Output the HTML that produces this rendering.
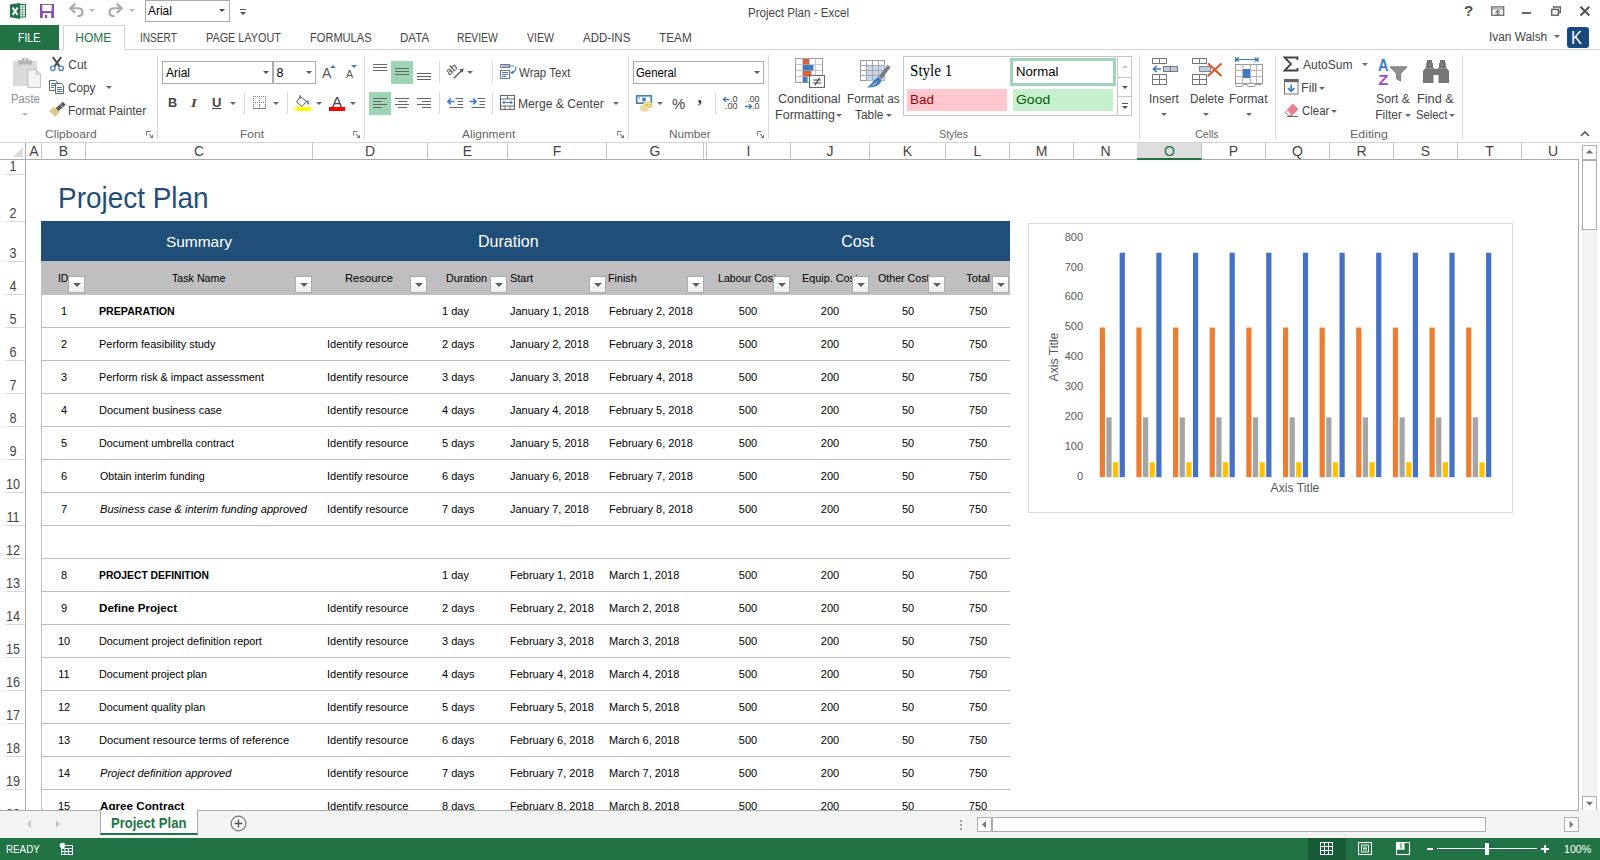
<!DOCTYPE html>
<html><head><meta charset="utf-8"><title>Project Plan - Excel</title>
<style>
*{box-sizing:border-box;margin:0;padding:0}
html,body{width:1600px;height:860px;overflow:hidden;background:#fff}
body{font-family:"Liberation Sans",sans-serif;position:relative;color:#444}
.t{position:absolute;white-space:nowrap;line-height:1}
.a{position:absolute}
.sep{position:absolute;width:1px;background:#dadada;top:55px;height:84px}
.sm{position:absolute;width:1px;background:#dadada}
.ar{position:absolute;width:0;height:0;border-left:3px solid transparent;border-right:3px solid transparent;border-top:3px solid #666}
.grp{position:absolute;top:128px;font-size:12px;color:#666;line-height:1;white-space:nowrap}
.ch{position:absolute;top:143px;height:16px;font-size:14px;line-height:16px;text-align:center;color:#444;border-right:1px solid #c6c6c6;padding-left:1px}
.rh{position:absolute;left:0;width:25px}
.rh:after{content:"";position:absolute;left:0;right:0;bottom:0;height:1px;background:linear-gradient(to right,#fbfbfb 0,#efefef 25%,#d6d6d6 30%,#d6d6d6 100%)}
.rn{position:absolute;left:0;width:26px;text-align:center;font-size:14.200px;line-height:1;color:#444;transform:scaleX(.89)}
.row{position:absolute;left:41px;width:969px;height:33px;border-bottom:1px solid #bdbdbd}
.c{position:absolute;white-space:nowrap;font-size:11px;line-height:13px;color:#000}
.fb{position:absolute;top:276px;width:17px;height:17px;border:1px solid #ababab;background:linear-gradient(#fff 0,#fff 60%,#f0f0f0 60%,#f2f2f2 100%)}
.fb:after{content:"";position:absolute;left:3.500px;top:6px;border-left:4px solid transparent;border-right:4px solid transparent;border-top:4.500px solid #606060}
.hd{position:absolute;white-space:nowrap;font-size:11px;line-height:13px;color:#000;top:272px;overflow:hidden}
</style></head><body>

<!-- title bar -->
<svg class="a" style="left:9px;top:2px" width="18" height="18" viewBox="9 2 18 18">
<rect x="19" y="4.500" width="6.500" height="12.500" fill="#fff" stroke="#217346" stroke-width="1"/>
<path d="M20 7h5M20 9.500h5M20 12h5M20 14.500h5M22.600 5v12" stroke="#217346" stroke-width=".55"/>
<path d="M10 4.600L20.200 3v16L10 17.300z" fill="#217346"/>
<path d="M12.600 7.600l5 7.400M17.600 7.600l-5 7.400" stroke="#fff" stroke-width="1.900"/>
</svg>
<svg class="a" style="left:40px;top:4px" width="14" height="14" viewBox="0 0 14 14">
<rect x="0" y="0" width="14" height="14" fill="#8a4fab"/>
<rect x="2.300" y=".9" width="9.400" height="6.200" fill="#fff"/>
<rect x="2.800" y="9.200" width="8.400" height="4.800" fill="#fff"/>
<rect x="4.900" y="11" width="2.300" height="3" fill="#8a4fab"/>
</svg>
<svg class="a" style="left:68px;top:2px" width="18" height="17" viewBox="68 2 18 17">
<path d="M70.500 8.300h7.200c3 0 4.800 1.700 4.800 4.100 0 2.300-1.900 3.800-5.300 3.800" fill="none" stroke="#ababab" stroke-width="2.100"/>
<path d="M75.300 3.800L70.300 8.300l5 4.500" fill="none" stroke="#ababab" stroke-width="2.300"/></svg>
<div class="ar" style="left:88.600px;top:9px;border-top-color:#b5b5b5"></div>
<svg class="a" style="left:107px;top:2px" width="18" height="17" viewBox="107 2 18 17">
<path d="M121.500 8.300h-7.200c-3 0-4.800 1.700-4.800 4.100 0 2.300 1.900 3.800 5.300 3.800" fill="none" stroke="#ababab" stroke-width="2.100"/>
<path d="M116.700 3.800l5 4.500-5 4.500" fill="none" stroke="#ababab" stroke-width="2.300"/></svg>
<div class="ar" style="left:128.800px;top:9px;border-top-color:#b5b5b5"></div>
<div class="a" style="left:145px;top:0;width:85px;height:22px;border:1px solid #ababab;background:#fff"></div>
<div class="t " style="left:148.40px;top:5px;font-size:12.5px;color:#000;;transform:scaleX(0.9526);transform-origin:0 0;">Arial</div>
<div class="ar" style="left:219px;top:9px;border-top-color:#444"></div>
<div class="a" style="left:240px;top:9px;width:6px;height:1px;background:#555"></div>
<div class="ar" style="left:240px;top:12px;border-top-color:#555"></div>
<div class="t " style="left:748.28px;top:7px;font-size:12px;color:#444;;transform:scaleX(0.9660);transform-origin:0 0;">Project Plan - Excel</div>
<div class="t " style="left:1463.69px;top:3.5px;font-size:14px;color:#555;font-weight:bold;transform:scaleX(1.0857);transform-origin:0 0;">?</div>
<svg class="a" style="left:1490px;top:5px" width="16" height="12" viewBox="1490 5 16 12"><rect x="1491.700" y="6.900" width="12" height="8.400" fill="#fff" stroke="#6a6a6a" stroke-width="1.300"/><path d="M1492 9h11.500" stroke="#6a6a6a" stroke-width=".9"/><path d="M1497.700 14.500V10.800M1495.600 12.600l2.100-2 2.100 2" stroke="#6a6a6a" stroke-width="1.100" fill="none"/><path d="M1495.300 14.200h4.800" stroke="#6a6a6a" stroke-width=".8"/></svg>
<div class="a" style="left:1522px;top:12px;width:9px;height:2px;background:#666"></div>
<svg class="a" style="left:1550px;top:5px" width="12" height="12" viewBox="0 0 12 12"><path d="M3.700 3.500V1.900h6.600v5.600h-1.800" fill="none" stroke="#666" stroke-width="1.500"/><rect x="1.700" y="4.400" width="6.600" height="5.800" fill="#fff" stroke="#666" stroke-width="1.500"/></svg>
<svg class="a" style="left:1579px;top:5px" width="12" height="12" viewBox="0 0 12 12"><path d="M1.500 1.700l8.800 8.800M10.300 1.700l-8.800 8.800" stroke="#555" stroke-width="2.100"/></svg>
<!-- tabs -->
<div class="a" style="left:0;top:49px;width:1600px;height:1px;background:#d4d4d4"></div>
<div class="a" style="left:0;top:25px;width:59px;height:25px;background:#217346"></div>
<div class="t " style="left:18.38px;top:32px;font-size:12px;color:#fff;;transform:scaleX(0.8737);transform-origin:0 0;">FILE</div>
<div class="a" style="left:63px;top:25px;width:62px;height:25px;border:1px solid #d4d4d4;border-bottom:1px solid #fff;background:#fff"></div>
<div class="t tab" style="left:75.25px;top:32px;font-size:12px;color:#217346;;transform:scaleX(1.0000);transform-origin:0 0;">HOME</div>
<div class="t tab" style="left:139.66px;top:32px;font-size:12px;color:#444;;transform:scaleX(0.8412);transform-origin:0 0;">INSERT</div>
<div class="t tab" style="left:205.90px;top:32px;font-size:12px;color:#444;;transform:scaleX(0.9028);transform-origin:0 0;">PAGE LAYOUT</div>
<div class="t tab" style="left:309.58px;top:32px;font-size:12px;color:#444;;transform:scaleX(0.9234);transform-origin:0 0;">FORMULAS</div>
<div class="t tab" style="left:399.78px;top:32px;font-size:12px;color:#444;;transform:scaleX(0.9658);transform-origin:0 0;">DATA</div>
<div class="t tab" style="left:457.39px;top:32px;font-size:12px;color:#444;;transform:scaleX(0.8595);transform-origin:0 0;">REVIEW</div>
<div class="t tab" style="left:527.00px;top:32px;font-size:12px;color:#444;;transform:scaleX(0.8770);transform-origin:0 0;">VIEW</div>
<div class="t tab" style="left:583.25px;top:32px;font-size:12px;color:#444;;transform:scaleX(0.9590);transform-origin:0 0;">ADD-INS</div>
<div class="t tab" style="left:659.00px;top:32px;font-size:12px;color:#444;;transform:scaleX(0.9844);transform-origin:0 0;">TEAM</div>
<div class="t " style="left:1488.91px;top:31px;font-size:12px;color:#444;;transform:scaleX(0.9869);transform-origin:0 0;">Ivan Walsh</div>
<div class="ar" style="left:1553.800px;top:35px"></div>
<div class="a" style="left:1567px;top:27px;width:22px;height:21px;background:#17497d;border-radius:3px"></div>
<div class="t " style="left:1571.27px;top:28.7px;font-size:18.5px;color:#fff;;transform:scaleX(0.8857);transform-origin:0 0;">K</div>
<!-- ribbon -->
<div class="a" style="left:0;top:142px;width:1600px;height:1px;background:#d4d4d4"></div>
<svg class="a" style="left:12px;top:57px" width="30" height="32" viewBox="0 0 30 32">
<rect x="1" y="3.700" width="24" height="25.200" rx="1.200" fill="#dadada"/>
<path d="M6.200 3.200h3.800v-1.200a1 1 0 0 1 1-1h4.300a1 1 0 0 1 1 1v1.200h3.800v4.200H6.200z" fill="#b4b4b4"/><rect x="12" y="1.700" width="2.400" height="1.600" fill="#e6e6e6"/>
<path d="M15.800 12.800h8.600l4.200 4.200v13.400H15.800z" fill="#f3f3f3" stroke="#bdbdbd"/><path d="M24.400 12.800v4.200h4.200" fill="none" stroke="#bdbdbd"/>
</svg>
<div class="t " style="left:10.81px;top:93px;font-size:12px;color:#8f8f8f;;transform:scaleX(0.9402);transform-origin:0 0;">Paste</div>
<div class="ar" style="left:21.6px;top:113px;border-top-color:#b5b5b5"></div>
<svg class="a" style="left:49px;top:56px" width="16" height="16" viewBox="0 0 16 16">
<path d="M3.800 1l6.700 9.300M12.200 1L5.500 10.300" stroke="#484848" stroke-width="2" fill="none"/>
<circle cx="3.800" cy="12.300" r="2.300" fill="none" stroke="#3f7bc0" stroke-width="1.200"/><circle cx="12.200" cy="12.300" r="2.300" fill="none" stroke="#3f7bc0" stroke-width="1.200"/></svg>
<div class="t " style="left:68.25px;top:59px;font-size:12px;color:#444;;transform:scaleX(1.0000);transform-origin:0 0;">Cut</div>
<svg class="a" style="left:48px;top:79px" width="17" height="16" viewBox="0 0 17 16">
<path d="M1.500 1.500h6l2 2v8h-8z" fill="#fff" stroke="#666"/><path d="M3 4.500h4M3 6.500h4M3 8.500h3" stroke="#3f7bc0"/>
<path d="M7.500 4.500h6l2 2v8h-8z" fill="#fff" stroke="#666"/><path d="M9 8.500h5M9 10.500h5M9 12.500h5" stroke="#3f7bc0"/></svg>
<div class="t " style="left:68.26px;top:82px;font-size:12px;color:#444;;transform:scaleX(0.9818);transform-origin:0 0;">Copy</div>
<div class="ar" style="left:105.5px;top:86px;border-top-color:#666"></div>
<svg class="a" style="left:48px;top:101px" width="19" height="18" viewBox="48 101 19 18">
<path d="M64.300 103.200L57 109.800" stroke="#5a5a5a" stroke-width="4.200" fill="none"/><path d="M62 105.300l-1.200 1.100" stroke="#8c8c8c" stroke-width="4.200"/>
<path d="M54.300 106.800l5.300 5.500-4.300 4.200-6.300-6z" fill="#dccb86"/><path d="M49 110.500l6.300 6" stroke="#f0c0a8" stroke-width="1" fill="none"/></svg>
<div class="t " style="left:67.77px;top:105px;font-size:12px;color:#444;;transform:scaleX(0.9840);transform-origin:0 0;">Format Painter</div>
<div class="t " style="left:44.93px;top:129px;font-size:10.5px;color:#666;;transform:scaleX(1.1486);transform-origin:0 0;">Clipboard</div>
<svg class="a" style="left:146px;top:131px" width="7" height="7" viewBox="0 0 7 7"><path d="M.5 4.500V.5H4.500" fill="none" stroke="#777"/><path d="M3 3l2.500 2.500" fill="none" stroke="#777"/><path d="M7 3.500V7H3.500z" fill="#777"/></svg>
<div class="sep" style="left:157px"></div>
<div class="a" style="left:162px;top:61px;width:111px;height:23px;border:1px solid #ababab;background:#fff"></div>
<div class="a" style="left:273px;top:61px;width:43px;height:23px;border:1px solid #ababab;background:#fff"></div>
<div class="t " style="left:165.50px;top:67px;font-size:12.5px;color:#000;;transform:scaleX(0.9588);transform-origin:0 0;">Arial</div>
<div class="ar" style="left:262.5px;top:71px;border-top-color:#555"></div>
<div class="t " style="left:276.50px;top:67px;font-size:12.5px;color:#000;;">8</div>
<div class="ar" style="left:305.5px;top:71px;border-top-color:#555"></div>
<div class="t " style="left:322.00px;top:65.5px;font-size:14.5px;color:#555;;transform:scaleX(0.9684);transform-origin:0 0;">A</div>
<div class="ar" style="left:329.500px;top:65px;border-top:none;border-bottom:3px solid #3f7bc0"></div>
<div class="t " style="left:345.50px;top:68.5px;font-size:11.5px;color:#555;;transform:scaleX(0.9333);transform-origin:0 0;">A</div>
<div class="ar" style="left:351px;top:65px;border-top-color:#3f7bc0"></div>
<div class="t " style="left:167.77px;top:96px;font-size:13px;color:#444;font-weight:bold;transform:scaleX(0.9750);transform-origin:0 0;">B</div>
<div class="t " style="left:191.27px;top:95.5px;font-size:13.5px;color:#444;font-style:italic;font-family:'Liberation Serif',serif;font-weight:bold;transform:scaleX(1.0833);transform-origin:0 0;">I</div>
<div class="t " style="left:212.00px;top:96px;font-size:13px;color:#444;font-weight:bold;text-decoration:underline;">U</div>
<div class="ar" style="left:230px;top:102px;border-top-color:#666"></div>
<div class="sm" style="left:244px;top:92px;height:22px"></div>
<svg class="a" style="left:252px;top:95px" width="15" height="15" viewBox="0 0 15 15" shape-rendering="crispEdges"><g fill="#7a7a7a"><rect x="1" y="1" width="1" height="1"/><rect x="1" y="7" width="1" height="1"/><rect x="3" y="1" width="1" height="1"/><rect x="3" y="7" width="1" height="1"/><rect x="5" y="1" width="1" height="1"/><rect x="5" y="7" width="1" height="1"/><rect x="7" y="1" width="1" height="1"/><rect x="7" y="7" width="1" height="1"/><rect x="9" y="1" width="1" height="1"/><rect x="9" y="7" width="1" height="1"/><rect x="11" y="1" width="1" height="1"/><rect x="11" y="7" width="1" height="1"/><rect x="13" y="1" width="1" height="1"/><rect x="13" y="7" width="1" height="1"/><rect x="1" y="3" width="1" height="1"/><rect x="7" y="3" width="1" height="1"/><rect x="13" y="3" width="1" height="1"/><rect x="1" y="5" width="1" height="1"/><rect x="7" y="5" width="1" height="1"/><rect x="13" y="5" width="1" height="1"/><rect x="1" y="9" width="1" height="1"/><rect x="7" y="9" width="1" height="1"/><rect x="13" y="9" width="1" height="1"/><rect x="1" y="11" width="1" height="1"/><rect x="7" y="11" width="1" height="1"/><rect x="13" y="11" width="1" height="1"/></g><rect x="1" y="13" width="13" height="1" fill="#7a7a7a"/></svg>
<div class="ar" style="left:273px;top:102px;border-top-color:#666"></div>
<div class="sm" style="left:287px;top:92px;height:22px"></div>
<svg class="a" style="left:294px;top:94px" width="18" height="18" viewBox="0 0 18 18">
<path d="M6.500 2.500l6 5-4.500 5-5.500-4.500z" fill="#fff" stroke="#555" stroke-width="1"/><path d="M6 1v4" stroke="#555"/>
<path d="M12.500 6.500c1.500 1 2.200 2.500 1.500 4" fill="none" stroke="#3f7bc0" stroke-width="1.500"/>
<rect x="1" y="13" width="16" height="4" fill="#ffff00"/></svg>
<div class="ar" style="left:316px;top:102px;border-top-color:#666"></div>
<div class="t " style="left:332.00px;top:95px;font-size:14.5px;color:#444;;transform:scaleX(1.0316);transform-origin:0 0;">A</div>
<div class="a" style="left:329px;top:107px;width:16px;height:4px;background:#ff0000"></div>
<div class="ar" style="left:350px;top:102px;border-top-color:#666"></div>
<div class="t " style="left:240.39px;top:129px;font-size:10.5px;color:#666;;transform:scaleX(1.1481);transform-origin:0 0;">Font</div>
<svg class="a" style="left:352.5px;top:131px" width="7" height="7" viewBox="0 0 7 7"><path d="M.5 4.500V.5H4.500" fill="none" stroke="#777"/><path d="M3 3l2.500 2.500" fill="none" stroke="#777"/><path d="M7 3.500V7H3.500z" fill="#777"/></svg>
<div class="sep" style="left:364px"></div>
<div class="a" style="left:373px;top:64px;width:14px;height:1px;background:#666"></div><div class="a" style="left:373px;top:67px;width:14px;height:1px;background:#666"></div><div class="a" style="left:373px;top:70px;width:14px;height:1px;background:#666"></div>
<div class="a" style="left:391px;top:61px;width:22px;height:23px;background:#9fd5b7"></div>
<div class="a" style="left:395px;top:68px;width:14px;height:1px;background:#666"></div><div class="a" style="left:395px;top:71px;width:14px;height:1px;background:#666"></div><div class="a" style="left:395px;top:74px;width:14px;height:1px;background:#666"></div>
<div class="a" style="left:417px;top:73px;width:14px;height:1px;background:#666"></div><div class="a" style="left:417px;top:76px;width:14px;height:1px;background:#666"></div><div class="a" style="left:417px;top:79px;width:14px;height:1px;background:#666"></div>
<div class="sm" style="left:439px;top:61px;height:22px"></div>
<svg class="a" style="left:445px;top:61px" width="22" height="20" viewBox="445 61 22 20"><text x="449.300" y="75.800" font-size="10.500" font-family="Liberation Sans" fill="#444" transform="rotate(-42 449.300 75.800)">ab</text><path d="M453.800 78.200L463 69.300" fill="none" stroke="#555" stroke-width="1.300"/><path d="M463.600 68.600l-4.200 1 3.300 3.200z" fill="#555"/></svg>
<div class="ar" style="left:466.5px;top:71px;border-top-color:#666"></div>
<div class="sm" style="left:492px;top:61px;height:22px"></div>
<svg class="a" style="left:499px;top:62px" width="19" height="18" viewBox="499 62 19 18">
<rect x="500.500" y="64.500" width="9" height="3" fill="#fff" stroke="#777"/><rect x="500.500" y="70.500" width="9" height="8" fill="#fff" stroke="#777"/>
<path d="M502 66h12M502 72.500h6M502 74.500h6M502 76.500h4" stroke="#3f7bc0" stroke-width="1"/>
<path d="M515.800 66.500c.5 3.500-1.500 6-5 6.300" fill="none" stroke="#3f7bc0" stroke-width="1.200"/><path d="M510.300 72.800l3-2.300.3 3.700z" fill="#3f7bc0"/></svg>
<div class="t " style="left:519.25px;top:67px;font-size:12px;color:#444;;transform:scaleX(0.9581);transform-origin:0 0;">Wrap Text</div>
<div class="a" style="left:369px;top:92px;width:22px;height:23px;background:#9fd5b7"></div>
<div class="a" style="left:373px;top:98px;width:14px;height:1px;background:#666"></div><div class="a" style="left:373px;top:101px;width:9px;height:1px;background:#666"></div><div class="a" style="left:373px;top:104px;width:14px;height:1px;background:#666"></div><div class="a" style="left:373px;top:107px;width:9px;height:1px;background:#666"></div>
<div class="a" style="left:395.0px;top:98px;width:14px;height:1px;background:#666"></div><div class="a" style="left:397.5px;top:101px;width:9px;height:1px;background:#666"></div><div class="a" style="left:395.0px;top:104px;width:14px;height:1px;background:#666"></div><div class="a" style="left:397.5px;top:107px;width:9px;height:1px;background:#666"></div>
<div class="a" style="left:417px;top:98px;width:14px;height:1px;background:#666"></div><div class="a" style="left:422px;top:101px;width:9px;height:1px;background:#666"></div><div class="a" style="left:417px;top:104px;width:14px;height:1px;background:#666"></div><div class="a" style="left:422px;top:107px;width:9px;height:1px;background:#666"></div>
<div class="sm" style="left:439px;top:92px;height:22px"></div>
<svg class="a" style="left:446px;top:96px" width="18" height="14" viewBox="446 96 18 14"><path d="M455.500 98.500h7.500M457.500 101.500h5.500M457.500 104.500h5.500M449.500 107.500h13.500" stroke="#666"/><path d="M454.500 101.500h-6.500M450.800 98.700l-2.800 2.800 2.800 2.800" fill="none" stroke="#3f7bc0" stroke-width="1.700"/></svg>
<svg class="a" style="left:468px;top:96px" width="18" height="14" viewBox="468 96 18 14"><path d="M477.500 98.500h7.500M479.500 101.500h5.500M479.500 104.500h5.500M471.500 107.500h13.500" stroke="#666"/><path d="M469.500 101.500h6.500M473.200 98.700l2.800 2.800-2.800 2.800" fill="none" stroke="#3f7bc0" stroke-width="1.700"/></svg>
<div class="sm" style="left:492px;top:92px;height:22px"></div>
<svg class="a" style="left:500px;top:95px" width="16" height="16" viewBox="0 0 16 16"><rect x=".5" y=".5" width="14" height="14" fill="#fff" stroke="#666"/><path d="M.5 4h14M.5 11h14M7.500 .5v3.500M5 11v3.500M10 11v3.500" stroke="#666"/><path d="M3 7.500h9" fill="none" stroke="#3f7bc0" stroke-width="1.200"/><path d="M2 7.500l2.500-2v4zM13 7.500l-2.500-2v4z" fill="#3f7bc0"/></svg>
<div class="t " style="left:518.24px;top:98px;font-size:12px;color:#444;;transform:scaleX(1.0120);transform-origin:0 0;">Merge &amp; Center</div>
<div class="ar" style="left:613px;top:102px;border-top-color:#666"></div>
<div class="t " style="left:462.00px;top:129px;font-size:10.5px;color:#666;;transform:scaleX(1.1398);transform-origin:0 0;">Alignment</div>
<svg class="a" style="left:616.7px;top:131px" width="7" height="7" viewBox="0 0 7 7"><path d="M.5 4.500V.5H4.500" fill="none" stroke="#777"/><path d="M3 3l2.500 2.500" fill="none" stroke="#777"/><path d="M7 3.500V7H3.500z" fill="#777"/></svg>
<div class="sep" style="left:628px"></div>
<div class="a" style="left:633px;top:61px;width:131px;height:23px;border:1px solid #ababab;background:#fff"></div>
<div class="t " style="left:635.80px;top:67px;font-size:12.5px;color:#000;;transform:scaleX(0.9075);transform-origin:0 0;">General</div>
<div class="ar" style="left:753.5px;top:71px;border-top-color:#555"></div>
<svg class="a" style="left:635px;top:94px" width="18" height="18" viewBox="635 94 18 18">
<rect x="636.700" y="95.800" width="14.600" height="7.400" fill="#fff" stroke="#3f7bc0" stroke-width="1.600"/><circle cx="644" cy="99.500" r="2" fill="#3f7bc0"/><rect x="638.500" y="97.300" width="1.500" height="1.200" fill="#3f7bc0"/>
<ellipse cx="648" cy="103.300" rx="4.300" ry="1.600" fill="#f1e3a6" stroke="#d4b94f" stroke-width=".7"/><ellipse cx="648.500" cy="105.800" rx="4.300" ry="1.600" fill="#f1e3a6" stroke="#d4b94f" stroke-width=".7"/><ellipse cx="644.500" cy="107.300" rx="4.300" ry="1.600" fill="#f1e3a6" stroke="#d4b94f" stroke-width=".7"/><ellipse cx="644.500" cy="109.600" rx="4.300" ry="1.600" fill="#f1e3a6" stroke="#e8b8a0" stroke-width=".7"/></svg>
<div class="ar" style="left:657px;top:102px;border-top-color:#666"></div>
<div class="t " style="left:672.00px;top:95.5px;font-size:15px;color:#444;;">%</div>
<div class="t " style="left:697.50px;top:88px;font-size:18px;color:#444;font-weight:bold;font-family:'Liberation Serif',serif;">,</div>
<div class="sm" style="left:715px;top:92px;height:22px"></div>
<svg class="a" style="left:722px;top:94px" width="17" height="17" viewBox="722 94 17 17"><text x="730" y="102.200" font-size="9" font-family="Liberation Sans" fill="#444">.0</text><text x="725" y="109.300" font-size="9" font-family="Liberation Sans" fill="#444">.00</text><path d="M729.500 99.500h-6M725.800 97.200l-2.400 2.300 2.400 2.300" fill="none" stroke="#3f7bc0" stroke-width="1.300"/></svg>
<svg class="a" style="left:744px;top:94px" width="17" height="17" viewBox="744 94 17 17"><text x="747" y="102.200" font-size="9" font-family="Liberation Sans" fill="#444">.00</text><text x="752" y="109.300" font-size="9" font-family="Liberation Sans" fill="#444">.0</text><path d="M745 106.500h6.500M749.200 104.200l2.400 2.300-2.400 2.300" fill="none" stroke="#3f7bc0" stroke-width="1.300"/></svg>
<div class="t " style="left:669.36px;top:129px;font-size:10.5px;color:#666;;transform:scaleX(1.1164);transform-origin:0 0;">Number</div>
<svg class="a" style="left:756.5px;top:131px" width="7" height="7" viewBox="0 0 7 7"><path d="M.5 4.500V.5H4.500" fill="none" stroke="#777"/><path d="M3 3l2.500 2.500" fill="none" stroke="#777"/><path d="M7 3.500V7H3.500z" fill="#777"/></svg>
<div class="sep" style="left:768px"></div>
<!-- ribbon right -->
<svg class="a" style="left:794px;top:56px" width="33" height="33" viewBox="794 56 33 33">
<rect x="795.500" y="58.500" width="27" height="24" fill="#fff" stroke="#9a9a9a"/>
<path d="M795.500 64.500h27M795.500 70.500h27M795.500 76.500h27M802.500 58.500v24M809.500 58.500v24M815.500 58.500v24" stroke="#b5b5b5" stroke-opacity=".75"/>
<rect x="803" y="59" width="6" height="5.500" fill="#d9623b"/><rect x="803" y="65" width="10.500" height="5.500" fill="#3f7bc0"/><rect x="803" y="71" width="8.500" height="5.500" fill="#d9623b"/><rect x="803" y="77" width="4.500" height="5.500" fill="#3f7bc0"/>
<rect x="809.500" y="75.500" width="15" height="12" fill="#fff" stroke="#666"/>
<path d="M813.300 80h7.600M813.300 83h7.600M819.500 77.800l-4.600 7.600" stroke="#444" stroke-width="1.100"/></svg>
<div class="t " style="left:777.73px;top:93px;font-size:12px;color:#444;;transform:scaleX(1.0426);transform-origin:0 0;">Conditional</div>
<div class="t " style="left:774.70px;top:109px;font-size:12px;color:#444;;transform:scaleX(1.0450);transform-origin:0 0;">Formatting</div>
<div class="ar" style="left:836px;top:114px;border-top-color:#666"></div>
<svg class="a" style="left:859px;top:58px" width="33" height="31" viewBox="859 58 33 31">
<rect x="860.500" y="60.500" width="24" height="20" fill="#fff" stroke="#9a9a9a"/>
<rect x="867" y="66" width="17.500" height="14.500" fill="#c5d7ee"/>
<path d="M860.500 65.500h24M860.500 70.500h24M860.500 75.500h24M866.500 60.500v20M872.500 60.500v20M878.500 60.500v20" stroke="#a8a8a8"/>
<path d="M887.600 65l2.900 2.200-8.600 11.800-3.200-2.400z" fill="#7c7c7c"/>
<path d="M878 77l3.600 2.700c-.6 5-6.800 8.300-14.600 7.700 4.300-2.300 5.600-6.600 11-10.400z" fill="#3f7bc0"/><path d="M872.500 85.200c2-.6 3.500-1.800 4.500-3.500" stroke="#cfe0f5" stroke-width="1" fill="none"/></svg>
<div class="t " style="left:846.52px;top:93px;font-size:12px;color:#444;;transform:scaleX(0.9762);transform-origin:0 0;">Format as</div>
<div class="t " style="left:855.25px;top:109px;font-size:12px;color:#444;;transform:scaleX(0.9911);transform-origin:0 0;">Table</div>
<div class="ar" style="left:885.7px;top:114px;border-top-color:#666"></div>
<div class="a" style="left:903px;top:56px;width:229px;height:60px;border:1px solid #c6c6c6;background:#fff"></div>
<div class="t " style="left:910.31px;top:63px;font-size:16px;color:#000;font-family:'Liberation Serif',serif;transform:scaleX(0.9419);transform-origin:0 0;">Style 1</div>
<div class="a" style="left:1010px;top:58px;width:106px;height:28px;border:3px solid #9fd5b7;background:#fff;outline:0"></div>
<div class="t " style="left:1015.99px;top:65px;font-size:13px;color:#000;;transform:scaleX(1.0125);transform-origin:0 0;">Normal</div>
<div class="a" style="left:907px;top:89px;width:100px;height:22px;background:#ffc7ce"></div>
<div class="t " style="left:910.21px;top:93px;font-size:13px;color:#9c0006;;transform:scaleX(1.0353);transform-origin:0 0;">Bad</div>
<div class="a" style="left:1013px;top:89px;width:100px;height:22px;background:#c6efce"></div>
<div class="t " style="left:1016.19px;top:93px;font-size:13px;color:#006100;;transform:scaleX(1.0744);transform-origin:0 0;">Good</div>
<div class="a" style="left:1117px;top:56px;width:15px;height:60px;border:1px solid #c6c6c6;background:#fff"></div>
<div class="a" style="left:1117px;top:77px;width:15px;height:1px;background:#c6c6c6"></div>
<div class="a" style="left:1117px;top:96px;width:15px;height:1px;background:#c6c6c6"></div>
<div class="ar" style="left:1121.500px;top:65px;border-top:none;border-bottom:3px solid #c6c6c6"></div>
<div class="ar" style="left:1121.5px;top:86px;border-top-color:#555"></div>
<div class="a" style="left:1121.500px;top:103px;width:6px;height:1px;background:#555"></div>
<div class="ar" style="left:1121.5px;top:106px;border-top-color:#555"></div>
<div class="t " style="left:938.74px;top:129px;font-size:10.5px;color:#666;;transform:scaleX(1.0180);transform-origin:0 0;">Styles</div>
<div class="sep" style="left:1139px"></div>
<svg class="a" style="left:1151px;top:57px" width="28" height="29" viewBox="0 0 28 29">
<rect x="1.500" y="1.500" width="14" height="5" fill="#fff" stroke="#777"/><path d="M8.500 1.500v5" stroke="#777"/>
<rect x="12.500" y="9.500" width="14" height="5" fill="#b9cde8" stroke="#777"/><path d="M19.500 9.500v5" stroke="#777"/>
<path d="M10 12H2.500M5.500 9l-3 3 3 3" fill="none" stroke="#3f7bc0" stroke-width="1.700"/>
<rect x="1.500" y="17.500" width="14" height="10" fill="#fff" stroke="#777"/><path d="M8.500 17.500v10M1.500 22.500h14" stroke="#777"/></svg>
<div class="t " style="left:1149.01px;top:93px;font-size:12px;color:#444;;transform:scaleX(0.9914);transform-origin:0 0;">Insert</div>
<div class="ar" style="left:1161px;top:113px;border-top-color:#666"></div>
<svg class="a" style="left:1191px;top:57px" width="32" height="29" viewBox="0 0 32 29">
<rect x="1.500" y="1.500" width="14" height="5" fill="#fff" stroke="#777"/><path d="M8.500 1.500v5" stroke="#777"/>
<rect x="8.500" y="9.500" width="11" height="5" fill="#b9cde8" stroke="#888"/>
<rect x="1.500" y="17.500" width="14" height="10" fill="#fff" stroke="#777"/><path d="M8.500 17.500v10M1.500 22.500h14" stroke="#777"/>
<path d="M17 6.500l13.500 12.500M30.500 6.500L17 19" stroke="#e0552b" stroke-width="2.200"/></svg>
<div class="t " style="left:1189.52px;top:93px;font-size:12px;color:#444;;transform:scaleX(0.9774);transform-origin:0 0;">Delete</div>
<div class="ar" style="left:1203px;top:113px;border-top-color:#666"></div>
<svg class="a" style="left:1234px;top:56px" width="30" height="32" viewBox="0 0 30 32">
<path d="M1.500 1v5M24 1v5M2 3.500h21.500M5 1.500l-3 2 3 2M20.500 1.500l3 2-3 2" fill="none" stroke="#3f7bc0" stroke-width="1.100"/>
<rect x="1.500" y="8.500" width="27" height="19" fill="#fff" stroke="#9a9a9a"/><path d="M1.500 14.500h27M1.500 20.500h27M8.500 8.500v19M16.500 8.500v19M22.500 8.500v19" stroke="#b5b5b5"/>
<rect x="9" y="13" width="7" height="9" fill="#3f7bc0"/>
<path d="M2 27.500v3h6l1-2h4l1 2h6l1-2h6" fill="none" stroke="#9a9a9a"/></svg>
<div class="t " style="left:1229.49px;top:93px;font-size:12px;color:#444;;transform:scaleX(1.0135);transform-origin:0 0;">Format</div>
<div class="ar" style="left:1246px;top:113px;border-top-color:#666"></div>
<div class="t " style="left:1195.25px;top:129px;font-size:10.5px;color:#666;;transform:scaleX(1.0000);transform-origin:0 0;">Cells</div>
<div class="sep" style="left:1275px"></div>
<svg class="a" style="left:1283px;top:56px" width="16" height="16" viewBox="0 0 16 16"><path d="M14.500 4V1.500H1.500L8 8l-6.500 6.500h13V12" fill="none" stroke="#444" stroke-width="1.800"/></svg>
<div class="t " style="left:1302.50px;top:59px;font-size:12px;color:#444;;transform:scaleX(1.0052);transform-origin:0 0;">AutoSum</div>
<div class="ar" style="left:1361.5px;top:63px;border-top-color:#666"></div>
<svg class="a" style="left:1283px;top:79px" width="16" height="16" viewBox="0 0 16 16"><rect x="1.500" y=".5" width="13.500" height="14.500" fill="#fff" stroke="#777"/><rect x="1" y="0" width="14.500" height="3.200" fill="#666"/><path d="M8.200 5.500v6.500M5 9.200l3.200 3.200 3.200-3.200" fill="none" stroke="#3f7bc0" stroke-width="1.700"/></svg>
<div class="t " style="left:1301.44px;top:82px;font-size:12px;color:#444;;transform:scaleX(1.0556);transform-origin:0 0;">Fill</div>
<div class="ar" style="left:1319px;top:87px;border-top-color:#666"></div>
<svg class="a" style="left:1284px;top:103px" width="16" height="14" viewBox="0 0 16 14"><path d="M8.500 1l5.500 5-6 6.500H4.500L1.500 9.500z" fill="#ee7f92" stroke="#d85a72" stroke-width=".6"/><path d="M1.500 9.500l3 3H8l-4-5.500z" fill="#fff" stroke="#d85a72" stroke-width=".6"/><path d="M3 13.500h11" stroke="#666"/></svg>
<div class="t " style="left:1302.02px;top:105px;font-size:12px;color:#444;;transform:scaleX(0.9554);transform-origin:0 0;">Clear</div>
<div class="ar" style="left:1331px;top:110px;border-top-color:#666"></div>
<svg class="a" style="left:1377px;top:57px" width="32" height="30" viewBox="0 0 32 30">
<text x="1" y="13.700" font-size="16" font-family="Liberation Sans" font-weight="bold" fill="#3f7bc0" textLength="10.500" lengthAdjust="spacingAndGlyphs">A</text>
<text x="1.300" y="27.800" font-size="15.500" font-family="Liberation Sans" font-weight="bold" fill="#9b4fc4" textLength="10.200" lengthAdjust="spacingAndGlyphs">Z</text>
<path d="M13 9.800h17l-6.500 7v7.300l-4 -2.300v-5z" fill="#8f8f8f" stroke="#6e6e6e" stroke-width=".8"/></svg>
<div class="t " style="left:1375.74px;top:93px;font-size:12px;color:#444;;transform:scaleX(1.0153);transform-origin:0 0;">Sort &amp;</div>
<div class="t " style="left:1375.25px;top:109px;font-size:12px;color:#444;;transform:scaleX(1.0000);transform-origin:0 0;">Filter</div>
<div class="ar" style="left:1404.5px;top:114px;border-top-color:#666"></div>
<svg class="a" style="left:1422px;top:59px" width="28" height="26" viewBox="0 0 28 26">
<path d="M5 1h5v3h1v4l1.500 2h3L17 8V4h1V1h5v3h1v4.500l3 3.500v12H16.500v-8h-5v8H1V12l3-3.500V4h1z" fill="#767676"/><path d="M4.500 9.500h6.500M17 9.500h6.500" stroke="#9a9a9a" stroke-width=".8"/></svg>
<div class="t " style="left:1417.19px;top:93px;font-size:12px;color:#444;;transform:scaleX(1.0597);transform-origin:0 0;">Find &amp;</div>
<div class="t " style="left:1415.78px;top:109px;font-size:12px;color:#444;;transform:scaleX(0.9389);transform-origin:0 0;">Select</div>
<div class="ar" style="left:1449px;top:114px;border-top-color:#666"></div>
<div class="t " style="left:1349.62px;top:129px;font-size:10.5px;color:#666;;transform:scaleX(1.1789);transform-origin:0 0;">Editing</div>
<div class="sep" style="left:1462px"></div>
<svg class="a" style="left:1580px;top:130px" width="10" height="7" viewBox="0 0 10 7"><path d="M1 6l4-4 4 4" fill="none" stroke="#555" stroke-width="1.600"/></svg>
<!-- column headers -->
<div class="a" style="left:0;top:159px;width:1579px;height:1px;background:#ababab"></div>
<div class="a" style="left:25px;top:143px;width:1px;height:667px;background:#ababab"></div>
<div class="a" style="left:13px;top:147px;width:0;height:0;border-left:10px solid transparent;border-bottom:10px solid #dcdcdc"></div>
<div class="ch" style="left:26px;width:16px;">A</div>
<div class="ch" style="left:41px;width:45px;">B</div>
<div class="ch" style="left:85px;width:228px;">C</div>
<div class="ch" style="left:312px;width:116px;">D</div>
<div class="ch" style="left:427px;width:81px;">E</div>
<div class="ch" style="left:507px;width:100px;">F</div>
<div class="ch" style="left:606px;width:98px;">G</div>
<div class="ch" style="left:703px;width:4px;"></div>
<div class="ch" style="left:706px;width:85px;">I</div>
<div class="ch" style="left:790px;width:80px;">J</div>
<div class="ch" style="left:869px;width:77px;">K</div>
<div class="ch" style="left:945px;width:65px;">L</div>
<div class="ch" style="left:1009px;width:65px;">M</div>
<div class="ch" style="left:1073px;width:65px;">N</div>
<div class="ch" style="left:1137px;width:65px;background:#dedede;color:#217346;border-bottom:2px solid #217346;height:17px;">O</div>
<div class="ch" style="left:1201px;width:65px;">P</div>
<div class="ch" style="left:1265px;width:65px;">Q</div>
<div class="ch" style="left:1329px;width:65px;">R</div>
<div class="ch" style="left:1393px;width:65px;">S</div>
<div class="ch" style="left:1457px;width:65px;">T</div>
<div class="ch" style="left:1521px;width:59px;border-right:none;padding-left:5px;">U</div>
<!-- row headers -->
<div class="rh" style="top:160px;height:15px"></div>
<div class="rn" style="top:158.9px">1</div>
<div class="rh" style="top:174px;height:48px"></div>
<div class="rn" style="top:205.9px">2</div>
<div class="rh" style="top:221px;height:41px"></div>
<div class="rn" style="top:245.9px">3</div>
<div class="rh" style="top:261px;height:34px"></div>
<div class="rn" style="top:278.9px">4</div>
<div class="rh" style="top:294px;height:34px"></div>
<div class="rn" style="top:311.9px">5</div>
<div class="rh" style="top:327px;height:34px"></div>
<div class="rn" style="top:344.9px">6</div>
<div class="rh" style="top:360px;height:34px"></div>
<div class="rn" style="top:377.9px">7</div>
<div class="rh" style="top:393px;height:34px"></div>
<div class="rn" style="top:410.9px">8</div>
<div class="rh" style="top:426px;height:34px"></div>
<div class="rn" style="top:443.9px">9</div>
<div class="rh" style="top:459px;height:34px"></div>
<div class="rn" style="top:476.9px">10</div>
<div class="rh" style="top:492px;height:34px"></div>
<div class="rn" style="top:509.9px">11</div>
<div class="rh" style="top:525px;height:34px"></div>
<div class="rn" style="top:542.9px">12</div>
<div class="rh" style="top:558px;height:34px"></div>
<div class="rn" style="top:575.9px">13</div>
<div class="rh" style="top:591px;height:34px"></div>
<div class="rn" style="top:608.9px">14</div>
<div class="rh" style="top:624px;height:34px"></div>
<div class="rn" style="top:641.9px">15</div>
<div class="rh" style="top:657px;height:34px"></div>
<div class="rn" style="top:674.9px">16</div>
<div class="rh" style="top:690px;height:34px"></div>
<div class="rn" style="top:707.9px">17</div>
<div class="rh" style="top:723px;height:34px"></div>
<div class="rn" style="top:740.9px">18</div>
<div class="rh" style="top:756px;height:34px"></div>
<div class="rn" style="top:773.9px">19</div>
<div class="rh" style="top:789px;height:34px"></div>
<div class="rn" style="top:806.9px">20</div>
<!-- sheet content -->
<div class="t " style="left:57.93px;top:183.5px;font-size:29px;color:#1f4e79;;transform:scaleX(0.9629);transform-origin:0 0;">Project Plan</div>
<div class="a" style="left:41px;top:221px;width:1px;height:589px;background:#c0c0c0"></div>
<div class="a" style="left:41px;top:221px;width:969px;height:40px;background:#1f4e79"></div>
<div class="t " style="left:49.099999999999994px;width:300px;text-align:center;top:234px;font-size:15.33px;color:#fff;;transform:scaleX(1.0085);"><span>Summary</span></div>
<div class="t " style="left:358.3px;width:300px;text-align:center;top:234px;font-size:16px;color:#fff;;">Duration</div>
<div class="t " style="left:707.7px;width:300px;text-align:center;top:234px;font-size:16px;color:#fff;;">Cost</div>
<div class="a" style="left:41px;top:261px;width:969px;height:34px;background:#bfbfbf"></div>
<div class="t " style="left:58.36px;top:272px;font-size:11px;color:#000;line-height:13px;transform:scaleX(0.9368);transform-origin:0 0;">ID</div>
<div class="t " style="left:172.06px;top:272px;font-size:11px;color:#000;line-height:13px;transform:scaleX(0.9696);transform-origin:0 0;">Task Name</div>
<div class="t " style="left:345.18px;top:272px;font-size:11px;color:#000;line-height:13px;transform:scaleX(1.0198);transform-origin:0 0;">Resource</div>
<div class="t " style="left:446.31px;top:272px;font-size:11px;color:#000;line-height:13px;transform:scaleX(0.9862);transform-origin:0 0;">Duration</div>
<div class="t " style="left:510.00px;top:272px;font-size:11px;color:#000;line-height:13px;transform:scaleX(0.9934);transform-origin:0 0;">Start</div>
<div class="t " style="left:608.32px;top:272px;font-size:11px;color:#000;line-height:13px;transform:scaleX(0.9802);transform-origin:0 0;">Finish</div>
<div class="a" style="left:0;top:261px;width:775.6px;height:34px;overflow:hidden"><div class="a" style="left:0;top:-261px"><div class="t " style="left:717.53px;top:272px;font-size:11px;color:#000;line-height:13px;transform:scaleX(0.9695);transform-origin:0 0;">Labour Cost</div></div></div>
<div class="a" style="left:0;top:261px;width:856.6px;height:34px;overflow:hidden"><div class="a" style="left:0;top:-261px"><div class="t " style="left:802.02px;top:272px;font-size:11px;color:#000;line-height:13px;transform:scaleX(0.9830);transform-origin:0 0;">Equip. Cost</div></div></div>
<div class="a" style="left:0;top:261px;width:929.6px;height:34px;overflow:hidden"><div class="a" style="left:0;top:-261px"><div class="t " style="left:877.62px;top:272px;font-size:11px;color:#000;line-height:13px;transform:scaleX(0.9687);transform-origin:0 0;">Other Cost</div></div></div>
<div class="t " style="left:965.84px;top:272px;font-size:11px;color:#000;line-height:13px;transform:scaleX(1.0337);transform-origin:0 0;">Total</div>
<div class="fb" style="left:68px"></div>
<div class="fb" style="left:295px"></div>
<div class="fb" style="left:410px"></div>
<div class="fb" style="left:490px"></div>
<div class="fb" style="left:589px"></div>
<div class="fb" style="left:687px"></div>
<div class="fb" style="left:773px"></div>
<div class="fb" style="left:852px"></div>
<div class="fb" style="left:928px"></div>
<div class="fb" style="left:992px"></div>
<div class="row" style="top:295px">
<div class="c" style="left:-7px;width:60px;text-align:center;top:10px">1</div>
<div class="t " style="left:58.28px;top:10px;font-size:11px;color:#000;font-weight:bold;line-height:13px;;transform:scaleX(0.9662);transform-origin:0 0;">PREPARATION</div>
<div class="c" style="left:401px;top:10px;">1 day</div>
<div class="c" style="left:469px;top:10px;">January 1, 2018</div>
<div class="c" style="left:568px;top:10px;">February 2, 2018</div>
<div class="c" style="left:677px;width:60px;text-align:center;top:10px">500</div>
<div class="c" style="left:759px;width:60px;text-align:center;top:10px">200</div>
<div class="c" style="left:837px;width:60px;text-align:center;top:10px">50</div>
<div class="c" style="left:907px;width:60px;text-align:center;top:10px">750</div>
</div>
<div class="row" style="top:328px">
<div class="c" style="left:-7px;width:60px;text-align:center;top:10px">2</div>
<div class="t " style="left:58.00px;top:10px;font-size:11px;color:#000;line-height:13px;;transform:scaleX(0.9970);transform-origin:0 0;">Perform feasibility study</div>
<div class="c" style="left:286px;top:10px;">Identify resource</div>
<div class="c" style="left:401px;top:10px;">2 days</div>
<div class="c" style="left:469px;top:10px;">January 2, 2018</div>
<div class="c" style="left:568px;top:10px;">February 3, 2018</div>
<div class="c" style="left:677px;width:60px;text-align:center;top:10px">500</div>
<div class="c" style="left:759px;width:60px;text-align:center;top:10px">200</div>
<div class="c" style="left:837px;width:60px;text-align:center;top:10px">50</div>
<div class="c" style="left:907px;width:60px;text-align:center;top:10px">750</div>
</div>
<div class="row" style="top:361px">
<div class="c" style="left:-7px;width:60px;text-align:center;top:10px">3</div>
<div class="t " style="left:58.01px;top:10px;font-size:11px;color:#000;line-height:13px;;transform:scaleX(0.9882);transform-origin:0 0;">Perform risk &amp; impact assessment</div>
<div class="c" style="left:286px;top:10px;">Identify resource</div>
<div class="c" style="left:401px;top:10px;">3 days</div>
<div class="c" style="left:469px;top:10px;">January 3, 2018</div>
<div class="c" style="left:568px;top:10px;">February 4, 2018</div>
<div class="c" style="left:677px;width:60px;text-align:center;top:10px">500</div>
<div class="c" style="left:759px;width:60px;text-align:center;top:10px">200</div>
<div class="c" style="left:837px;width:60px;text-align:center;top:10px">50</div>
<div class="c" style="left:907px;width:60px;text-align:center;top:10px">750</div>
</div>
<div class="row" style="top:394px">
<div class="c" style="left:-7px;width:60px;text-align:center;top:10px">4</div>
<div class="t " style="left:58.00px;top:10px;font-size:11px;color:#000;line-height:13px;;transform:scaleX(1.0000);transform-origin:0 0;">Document business case</div>
<div class="c" style="left:286px;top:10px;">Identify resource</div>
<div class="c" style="left:401px;top:10px;">4 days</div>
<div class="c" style="left:469px;top:10px;">January 4, 2018</div>
<div class="c" style="left:568px;top:10px;">February 5, 2018</div>
<div class="c" style="left:677px;width:60px;text-align:center;top:10px">500</div>
<div class="c" style="left:759px;width:60px;text-align:center;top:10px">200</div>
<div class="c" style="left:837px;width:60px;text-align:center;top:10px">50</div>
<div class="c" style="left:907px;width:60px;text-align:center;top:10px">750</div>
</div>
<div class="row" style="top:427px">
<div class="c" style="left:-7px;width:60px;text-align:center;top:10px">5</div>
<div class="t " style="left:58.02px;top:10px;font-size:11px;color:#000;line-height:13px;;transform:scaleX(0.9810);transform-origin:0 0;">Document umbrella contract</div>
<div class="c" style="left:286px;top:10px;">Identify resource</div>
<div class="c" style="left:401px;top:10px;">5 days</div>
<div class="c" style="left:469px;top:10px;">January 5, 2018</div>
<div class="c" style="left:568px;top:10px;">February 6, 2018</div>
<div class="c" style="left:677px;width:60px;text-align:center;top:10px">500</div>
<div class="c" style="left:759px;width:60px;text-align:center;top:10px">200</div>
<div class="c" style="left:837px;width:60px;text-align:center;top:10px">50</div>
<div class="c" style="left:907px;width:60px;text-align:center;top:10px">750</div>
</div>
<div class="row" style="top:460px">
<div class="c" style="left:-7px;width:60px;text-align:center;top:10px">6</div>
<div class="t " style="left:58.51px;top:10px;font-size:11px;color:#000;line-height:13px;;transform:scaleX(0.9737);transform-origin:0 0;">Obtain interim funding</div>
<div class="c" style="left:286px;top:10px;">Identify resource</div>
<div class="c" style="left:401px;top:10px;">6 days</div>
<div class="c" style="left:469px;top:10px;">January 6, 2018</div>
<div class="c" style="left:568px;top:10px;">February 7, 2018</div>
<div class="c" style="left:677px;width:60px;text-align:center;top:10px">500</div>
<div class="c" style="left:759px;width:60px;text-align:center;top:10px">200</div>
<div class="c" style="left:837px;width:60px;text-align:center;top:10px">50</div>
<div class="c" style="left:907px;width:60px;text-align:center;top:10px">750</div>
</div>
<div class="row" style="top:493px">
<div class="c" style="left:-7px;width:60px;text-align:center;top:10px">7</div>
<div class="t " style="left:58.75px;top:10px;font-size:11px;color:#000;font-style:italic;line-height:13px;;transform:scaleX(1.0073);transform-origin:0 0;">Business case &amp; interim funding approved</div>
<div class="c" style="left:286px;top:10px;">Identify resource</div>
<div class="c" style="left:401px;top:10px;">7 days</div>
<div class="c" style="left:469px;top:10px;">January 7, 2018</div>
<div class="c" style="left:568px;top:10px;">February 8, 2018</div>
<div class="c" style="left:677px;width:60px;text-align:center;top:10px">500</div>
<div class="c" style="left:759px;width:60px;text-align:center;top:10px">200</div>
<div class="c" style="left:837px;width:60px;text-align:center;top:10px">50</div>
<div class="c" style="left:907px;width:60px;text-align:center;top:10px">750</div>
</div>
<div class="row" style="top:526px">
</div>
<div class="row" style="top:559px">
<div class="c" style="left:-7px;width:60px;text-align:center;top:10px">8</div>
<div class="t " style="left:58.30px;top:10px;font-size:11px;color:#000;font-weight:bold;line-height:13px;;transform:scaleX(0.9374);transform-origin:0 0;">PROJECT DEFINITION</div>
<div class="c" style="left:401px;top:10px;">1 day</div>
<div class="c" style="left:469px;top:10px;">February 1, 2018</div>
<div class="c" style="left:568px;top:10px;">March 1, 2018</div>
<div class="c" style="left:677px;width:60px;text-align:center;top:10px">500</div>
<div class="c" style="left:759px;width:60px;text-align:center;top:10px">200</div>
<div class="c" style="left:837px;width:60px;text-align:center;top:10px">50</div>
<div class="c" style="left:907px;width:60px;text-align:center;top:10px">750</div>
</div>
<div class="row" style="top:592px">
<div class="c" style="left:-7px;width:60px;text-align:center;top:10px">9</div>
<div class="t " style="left:58.21px;top:10px;font-size:11px;color:#000;font-weight:bold;line-height:13px;;transform:scaleX(1.0548);transform-origin:0 0;">Define Project</div>
<div class="c" style="left:286px;top:10px;">Identify resource</div>
<div class="c" style="left:401px;top:10px;">2 days</div>
<div class="c" style="left:469px;top:10px;">February 2, 2018</div>
<div class="c" style="left:568px;top:10px;">March 2, 2018</div>
<div class="c" style="left:677px;width:60px;text-align:center;top:10px">500</div>
<div class="c" style="left:759px;width:60px;text-align:center;top:10px">200</div>
<div class="c" style="left:837px;width:60px;text-align:center;top:10px">50</div>
<div class="c" style="left:907px;width:60px;text-align:center;top:10px">750</div>
</div>
<div class="row" style="top:625px">
<div class="c" style="left:-7px;width:60px;text-align:center;top:10px">10</div>
<div class="t " style="left:58.01px;top:10px;font-size:11px;color:#000;line-height:13px;;transform:scaleX(0.9866);transform-origin:0 0;">Document project definition report</div>
<div class="c" style="left:286px;top:10px;">Identify resource</div>
<div class="c" style="left:401px;top:10px;">3 days</div>
<div class="c" style="left:469px;top:10px;">February 3, 2018</div>
<div class="c" style="left:568px;top:10px;">March 3, 2018</div>
<div class="c" style="left:677px;width:60px;text-align:center;top:10px">500</div>
<div class="c" style="left:759px;width:60px;text-align:center;top:10px">200</div>
<div class="c" style="left:837px;width:60px;text-align:center;top:10px">50</div>
<div class="c" style="left:907px;width:60px;text-align:center;top:10px">750</div>
</div>
<div class="row" style="top:658px">
<div class="c" style="left:-7px;width:60px;text-align:center;top:10px">11</div>
<div class="t " style="left:58.02px;top:10px;font-size:11px;color:#000;line-height:13px;;transform:scaleX(0.9820);transform-origin:0 0;">Document project plan</div>
<div class="c" style="left:286px;top:10px;">Identify resource</div>
<div class="c" style="left:401px;top:10px;">4 days</div>
<div class="c" style="left:469px;top:10px;">February 4, 2018</div>
<div class="c" style="left:568px;top:10px;">March 4, 2018</div>
<div class="c" style="left:677px;width:60px;text-align:center;top:10px">500</div>
<div class="c" style="left:759px;width:60px;text-align:center;top:10px">200</div>
<div class="c" style="left:837px;width:60px;text-align:center;top:10px">50</div>
<div class="c" style="left:907px;width:60px;text-align:center;top:10px">750</div>
</div>
<div class="row" style="top:691px">
<div class="c" style="left:-7px;width:60px;text-align:center;top:10px">12</div>
<div class="t " style="left:58.02px;top:10px;font-size:11px;color:#000;line-height:13px;;transform:scaleX(0.9753);transform-origin:0 0;">Document quality plan</div>
<div class="c" style="left:286px;top:10px;">Identify resource</div>
<div class="c" style="left:401px;top:10px;">5 days</div>
<div class="c" style="left:469px;top:10px;">February 5, 2018</div>
<div class="c" style="left:568px;top:10px;">March 5, 2018</div>
<div class="c" style="left:677px;width:60px;text-align:center;top:10px">500</div>
<div class="c" style="left:759px;width:60px;text-align:center;top:10px">200</div>
<div class="c" style="left:837px;width:60px;text-align:center;top:10px">50</div>
<div class="c" style="left:907px;width:60px;text-align:center;top:10px">750</div>
</div>
<div class="row" style="top:724px">
<div class="c" style="left:-7px;width:60px;text-align:center;top:10px">13</div>
<div class="t " style="left:57.99px;top:10px;font-size:11px;color:#000;line-height:13px;;transform:scaleX(1.0094);transform-origin:0 0;">Document resource terms of reference</div>
<div class="c" style="left:286px;top:10px;">Identify resource</div>
<div class="c" style="left:401px;top:10px;">6 days</div>
<div class="c" style="left:469px;top:10px;">February 6, 2018</div>
<div class="c" style="left:568px;top:10px;">March 6, 2018</div>
<div class="c" style="left:677px;width:60px;text-align:center;top:10px">500</div>
<div class="c" style="left:759px;width:60px;text-align:center;top:10px">200</div>
<div class="c" style="left:837px;width:60px;text-align:center;top:10px">50</div>
<div class="c" style="left:907px;width:60px;text-align:center;top:10px">750</div>
</div>
<div class="row" style="top:757px">
<div class="c" style="left:-7px;width:60px;text-align:center;top:10px">14</div>
<div class="t " style="left:58.75px;top:10px;font-size:11px;color:#000;font-style:italic;line-height:13px;;transform:scaleX(1.0081);transform-origin:0 0;">Project definition approved</div>
<div class="c" style="left:286px;top:10px;">Identify resource</div>
<div class="c" style="left:401px;top:10px;">7 days</div>
<div class="c" style="left:469px;top:10px;">February 7, 2018</div>
<div class="c" style="left:568px;top:10px;">March 7, 2018</div>
<div class="c" style="left:677px;width:60px;text-align:center;top:10px">500</div>
<div class="c" style="left:759px;width:60px;text-align:center;top:10px">200</div>
<div class="c" style="left:837px;width:60px;text-align:center;top:10px">50</div>
<div class="c" style="left:907px;width:60px;text-align:center;top:10px">750</div>
</div>
<div class="row" style="top:790px">
<div class="c" style="left:-7px;width:60px;text-align:center;top:10px">15</div>
<div class="t " style="left:58.73px;top:10px;font-size:11px;color:#000;font-weight:bold;line-height:13px;;transform:scaleX(1.0608);transform-origin:0 0;">Agree Contract</div>
<div class="c" style="left:286px;top:10px;">Identify resource</div>
<div class="c" style="left:401px;top:10px;">8 days</div>
<div class="c" style="left:469px;top:10px;">February 8, 2018</div>
<div class="c" style="left:568px;top:10px;">March 8, 2018</div>
<div class="c" style="left:677px;width:60px;text-align:center;top:10px">500</div>
<div class="c" style="left:759px;width:60px;text-align:center;top:10px">200</div>
<div class="c" style="left:837px;width:60px;text-align:center;top:10px">50</div>
<div class="c" style="left:907px;width:60px;text-align:center;top:10px">750</div>
</div>
<!-- chart -->
<div class="a" style="left:1028px;top:223px;width:485px;height:290px;border:1px solid #d9d9d9;background:#fff"></div>
<svg class="a" style="left:1028px;top:223px" width="485" height="290" viewBox="1028 223 485 290"><rect x="1099.73" y="327.55" width="5.230" height="149.65" fill="#ed7d31"/><rect x="1106.37" y="417.34" width="5.230" height="59.86" fill="#a5a5a5"/><rect x="1113.01" y="462.24" width="5.230" height="14.96" fill="#ffc000"/><rect x="1119.65" y="252.72" width="5.230" height="224.47" fill="#4472c4"/><rect x="1136.37" y="327.55" width="5.230" height="149.65" fill="#ed7d31"/><rect x="1143.01" y="417.34" width="5.230" height="59.86" fill="#a5a5a5"/><rect x="1149.65" y="462.24" width="5.230" height="14.96" fill="#ffc000"/><rect x="1156.29" y="252.72" width="5.230" height="224.47" fill="#4472c4"/><rect x="1173.01" y="327.55" width="5.230" height="149.65" fill="#ed7d31"/><rect x="1179.65" y="417.34" width="5.230" height="59.86" fill="#a5a5a5"/><rect x="1186.29" y="462.24" width="5.230" height="14.96" fill="#ffc000"/><rect x="1192.93" y="252.72" width="5.230" height="224.47" fill="#4472c4"/><rect x="1209.65" y="327.55" width="5.230" height="149.65" fill="#ed7d31"/><rect x="1216.29" y="417.34" width="5.230" height="59.86" fill="#a5a5a5"/><rect x="1222.93" y="462.24" width="5.230" height="14.96" fill="#ffc000"/><rect x="1229.57" y="252.72" width="5.230" height="224.47" fill="#4472c4"/><rect x="1246.29" y="327.55" width="5.230" height="149.65" fill="#ed7d31"/><rect x="1252.93" y="417.34" width="5.230" height="59.86" fill="#a5a5a5"/><rect x="1259.57" y="462.24" width="5.230" height="14.96" fill="#ffc000"/><rect x="1266.21" y="252.72" width="5.230" height="224.47" fill="#4472c4"/><rect x="1282.93" y="327.55" width="5.230" height="149.65" fill="#ed7d31"/><rect x="1289.57" y="417.34" width="5.230" height="59.86" fill="#a5a5a5"/><rect x="1296.21" y="462.24" width="5.230" height="14.96" fill="#ffc000"/><rect x="1302.85" y="252.72" width="5.230" height="224.47" fill="#4472c4"/><rect x="1319.57" y="327.55" width="5.230" height="149.65" fill="#ed7d31"/><rect x="1326.21" y="417.34" width="5.230" height="59.86" fill="#a5a5a5"/><rect x="1332.85" y="462.24" width="5.230" height="14.96" fill="#ffc000"/><rect x="1339.49" y="252.72" width="5.230" height="224.47" fill="#4472c4"/><rect x="1356.21" y="327.55" width="5.230" height="149.65" fill="#ed7d31"/><rect x="1362.85" y="417.34" width="5.230" height="59.86" fill="#a5a5a5"/><rect x="1369.49" y="462.24" width="5.230" height="14.96" fill="#ffc000"/><rect x="1376.13" y="252.72" width="5.230" height="224.47" fill="#4472c4"/><rect x="1392.85" y="327.55" width="5.230" height="149.65" fill="#ed7d31"/><rect x="1399.49" y="417.34" width="5.230" height="59.86" fill="#a5a5a5"/><rect x="1406.13" y="462.24" width="5.230" height="14.96" fill="#ffc000"/><rect x="1412.77" y="252.72" width="5.230" height="224.47" fill="#4472c4"/><rect x="1429.49" y="327.55" width="5.230" height="149.65" fill="#ed7d31"/><rect x="1436.13" y="417.34" width="5.230" height="59.86" fill="#a5a5a5"/><rect x="1442.77" y="462.24" width="5.230" height="14.96" fill="#ffc000"/><rect x="1449.41" y="252.72" width="5.230" height="224.47" fill="#4472c4"/><rect x="1466.13" y="327.55" width="5.230" height="149.65" fill="#ed7d31"/><rect x="1472.77" y="417.34" width="5.230" height="59.86" fill="#a5a5a5"/><rect x="1479.41" y="462.24" width="5.230" height="14.96" fill="#ffc000"/><rect x="1486.05" y="252.72" width="5.230" height="224.47" fill="#4472c4"/></svg>
<div class="t" style="left:1043px;width:40px;text-align:right;top:471.0px;font-size:11px;color:#595959">0</div>
<div class="t" style="left:1043px;width:40px;text-align:right;top:441.1px;font-size:11px;color:#595959">100</div>
<div class="t" style="left:1043px;width:40px;text-align:right;top:411.1px;font-size:11px;color:#595959">200</div>
<div class="t" style="left:1043px;width:40px;text-align:right;top:381.2px;font-size:11px;color:#595959">300</div>
<div class="t" style="left:1043px;width:40px;text-align:right;top:351.3px;font-size:11px;color:#595959">400</div>
<div class="t" style="left:1043px;width:40px;text-align:right;top:321.4px;font-size:11px;color:#595959">500</div>
<div class="t" style="left:1043px;width:40px;text-align:right;top:291.4px;font-size:11px;color:#595959">600</div>
<div class="t" style="left:1043px;width:40px;text-align:right;top:261.5px;font-size:11px;color:#595959">700</div>
<div class="t" style="left:1043px;width:40px;text-align:right;top:231.6px;font-size:11px;color:#595959">800</div>
<div class="t" style="left:1245px;width:100px;text-align:center;top:482px;font-size:12.200px;color:#595959">Axis Title</div>
<div class="t" style="left:1003.500px;width:100px;text-align:center;top:350.500px;font-size:12.200px;color:#595959;transform:rotate(-90deg)">Axis Title</div>
<!-- scrollbars -->
<div class="a" style="left:1579px;top:143px;width:21px;height:667px;background:#fff"></div>
<div class="a" style="left:1578px;top:160px;width:1px;height:650px;background:#ababab"></div>
<div class="a" style="left:1582px;top:160px;width:15px;height:637px;background:#f2f4f3"></div>
<svg class="a" style="left:1582px;top:145px" width="15" height="15" viewBox="0 0 16 16" preserveAspectRatio="none"><rect x=".5" y=".5" width="15" height="15" fill="#fff" stroke="#ababab"/><path d="M4 9l4-4 4 4z" fill="#777"/></svg>
<div class="a" style="left:1582px;top:160px;width:15px;height:70px;border:1px solid #ababab;background:#fff"></div>
<svg class="a" style="left:1582px;top:796px" width="15" height="15" viewBox="0 0 16 16" preserveAspectRatio="none"><rect x=".5" y=".5" width="15" height="15" fill="#fff" stroke="#ababab"/><path d="M4 6l4 4 4-4z" fill="#777"/></svg>
<div class="a" style="left:0;top:810px;width:1600px;height:29px;background:#f2f4f3"></div><div class="a" style="left:0;top:810px;width:1579px;height:1px;background:#ababab"></div>
<div class="ar" style="left:27px;top:820px;border:none;border-top:4px solid transparent;border-bottom:4px solid transparent;border-right:4px solid #c8c8c8"></div>
<div class="ar" style="left:56px;top:820px;border:none;border-top:4px solid transparent;border-bottom:4px solid transparent;border-left:4px solid #c8c8c8"></div>
<div class="a" style="left:100px;top:810px;width:98px;height:25px;background:#fff;border-left:1px solid #ababab;border-right:1px solid #ababab;border-bottom:2px solid #217346"></div>
<div class="t " style="left:111.17px;top:815.75px;font-size:14px;color:#217346;font-weight:bold;transform:scaleX(0.9316);transform-origin:0 0;">Project Plan</div>
<svg class="a" style="left:230px;top:815px" width="17" height="17" viewBox="0 0 17 17"><circle cx="8.500" cy="8.500" r="7.300" fill="#f8f8f8" stroke="#777" stroke-width="1.200"/><path d="M8.500 4.500v8M4.500 8.500h8" stroke="#555" stroke-width="1.400"/></svg>
<div class="a" style="left:960px;top:820px;width:2px;height:2px;background:#a0a0a0"></div>
<div class="a" style="left:960px;top:824px;width:2px;height:2px;background:#a0a0a0"></div>
<div class="a" style="left:960px;top:827.5px;width:2px;height:2px;background:#a0a0a0"></div>
<svg class="a" style="left:977px;top:817px" width="16" height="15" viewBox="0 0 16 16" preserveAspectRatio="none"><rect x=".5" y=".5" width="15" height="15" fill="#fff" stroke="#ababab"/><path d="M9 4l-4 4 4 4z" fill="#777"/></svg>
<div class="a" style="left:991px;top:817px;width:495px;height:15px;border:1px solid #ababab;border-left-width:2px;background:#fff"></div>
<svg class="a" style="left:1564px;top:817px" width="15" height="15" viewBox="0 0 16 16" preserveAspectRatio="none"><rect x=".5" y=".5" width="15" height="15" fill="#fff" stroke="#ababab"/><path d="M6 4l4 4-4 4z" fill="#777"/></svg>
<div class="a" style="left:0;top:838px;width:1600px;height:22px;background:#217346"></div>
<div class="t " style="left:6.41px;top:844px;font-size:11px;color:#fff;;transform:scaleX(0.8904);transform-origin:0 0;">READY</div>
<svg class="a" style="left:59px;top:842px" width="15" height="14" viewBox="0 0 15 14"><rect x="2.500" y="3.500" width="11" height="9" fill="none" stroke="#fff"/><path d="M2.500 6.500h11M6 7v5.500M9.500 7v5.500M3 9.500h10" stroke="#fff"/><circle cx="3.500" cy="3.500" r="2.800" fill="#fff"/></svg>
<div class="a" style="left:1308px;top:838px;width:38px;height:22px;background:#185c37"></div>
<svg class="a" style="left:1320px;top:842px" width="14" height="13" viewBox="0 0 14 13" shape-rendering="crispEdges"><path d="M.5 .5h12v12h-12zM.5 4.500h12M.5 8.500h12M4.500 .5v12M8.500 .5v12" fill="none" stroke="#fff" stroke-width="1.200"/></svg>
<svg class="a" style="left:1358px;top:842px" width="15" height="14" viewBox="0 0 15 14"><rect x=".5" y=".5" width="13" height="12" fill="none" stroke="#fff" stroke-width="1.100"/><rect x="3.500" y="3" width="7" height="7" fill="none" stroke="#fff" stroke-width=".9"/><path d="M5 5h4M5 6.500h4M5 8h4" stroke="#fff" stroke-width=".8"/></svg>
<svg class="a" style="left:1396px;top:842px" width="15" height="14" viewBox="0 0 15 14"><rect x=".5" y=".5" width="13" height="12" fill="none" stroke="#fff" stroke-width="1.100"/><rect x="1" y="1" width="3.500" height="6.500" fill="#fff"/><rect x="5.500" y="1" width="3" height="6.500" fill="#fff"/><rect x="1" y="6.500" width="7.500" height="1" fill="#fff"/></svg>
<div class="a" style="left:1427px;top:848px;width:6px;height:2px;background:#fff"></div>
<div class="a" style="left:1437px;top:848px;width:100px;height:1px;background:#fff"></div>
<div class="a" style="left:1485px;top:843px;width:4px;height:12px;background:#fff"></div>
<div class="a" style="left:1541px;top:848px;width:8px;height:2px;background:#fff"></div><div class="a" style="left:1544px;top:845px;width:2px;height:8px;background:#fff"></div>
<div class="t " style="left:1564.27px;top:844px;font-size:11px;color:#fff;;transform:scaleX(0.9704);transform-origin:0 0;">100%</div>
</body></html>
